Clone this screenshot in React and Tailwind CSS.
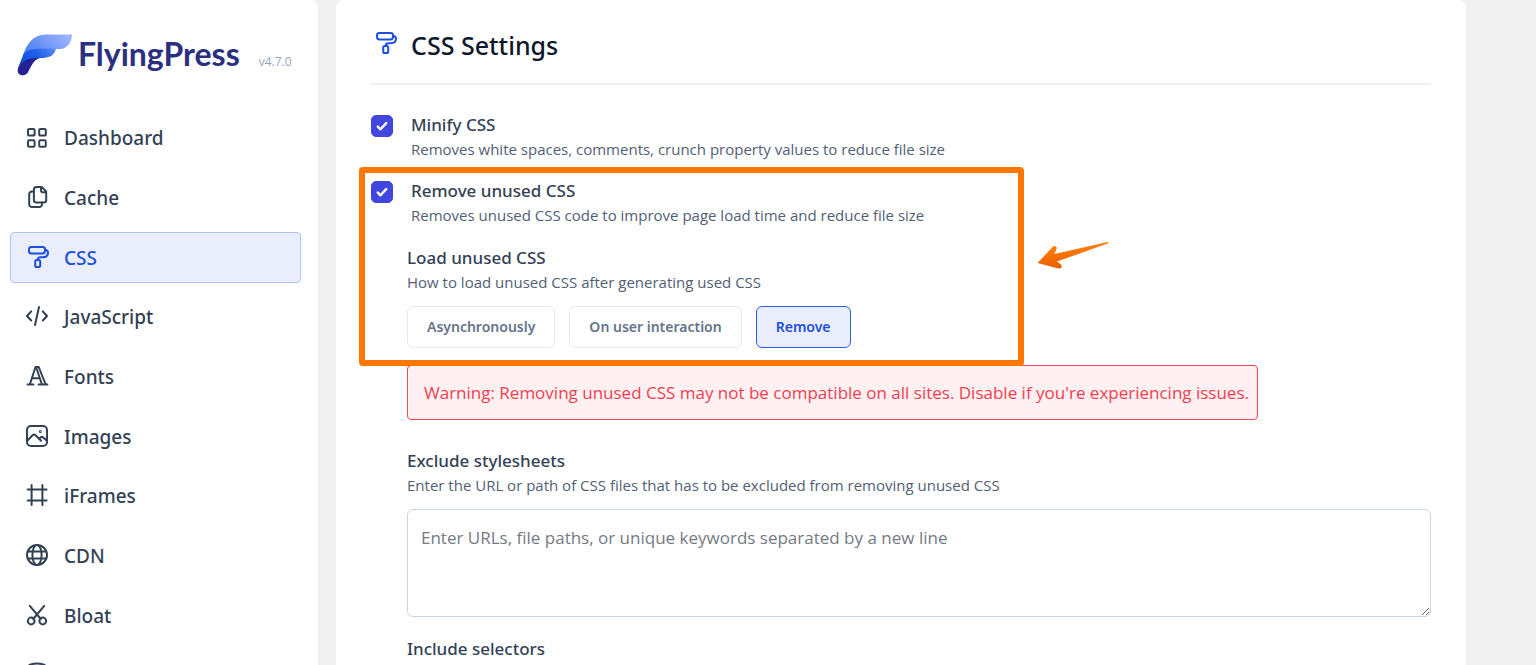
import React from "react";

function Icon({ children, className = "size-6" }) {
  return (
    <svg
      viewBox="0 0 24 24"
      className={`shrink-0 ${className}`}
      fill="none"
      stroke="currentColor"
      strokeWidth="2"
      strokeLinecap="round"
      strokeLinejoin="round"
      aria-hidden="true"
    >
      {children}
    </svg>
  );
}

const icons = {
  dashboard: (
    <>
      <rect x="3" y="3" width="6.6" height="6.6" rx="1.2" />
      <rect x="14.2" y="3" width="6.6" height="6.6" rx="1.2" />
      <rect x="3" y="14.2" width="6.6" height="6.6" rx="1.2" />
      <rect x="14.2" y="14.2" width="6.6" height="6.6" rx="1.2" />
    </>
  ),
  cache: (
    <>
      <path d="M11.5 2h5.2l4.5 4.5V15a2.6 2.6 0 0 1-2.6 2.6h-7.1A2.6 2.6 0 0 1 8.9 15V4.6A2.6 2.6 0 0 1 11.5 2z" />
      <path d="M16 2.5v3.2a1.5 1.5 0 0 0 1.5 1.5h3.3" />
      <path d="M8.9 6.4H7a2.8 2.8 0 0 0-2.8 2.8v10A2.8 2.8 0 0 0 7 22h7.2a2.8 2.8 0 0 0 2.8-2.8v-1.6" />
    </>
  ),
  roller: (
    <>
      <rect x="4" y="2" width="16" height="6.4" rx="2.4" />
      <path d="M20 4.8c2.4.3 3.3 1.8 3 3.6-.4 2.6-2.3 3.8-5 3.8h-2.6c-1.9 0-2.8.9-2.8 2.8" />
      <rect x="10.2" y="15" width="5" height="7" rx="1.6" />
    </>
  ),
  code: (
    <>
      <path d="M6.2 7.3 2 12l4.200 4.500M17.800 7.300 22 12l-4.200 4.500" />
      <path d="M14 3 10 21" />
    </>
  ),
  fonts: (
    <>
      <path d="M5 20 10.500 3h3.200l6.800 17" />
      <path d="M11.200 3.500 16.800 20M7.400 14.300h7" />
      <path d="M2.600 20.600h5.800M13.600 20.600h8.800" />
    </>
  ),
  images: (
    <>
      <rect x="2" y="2" width="20" height="20" rx="4" />
      <path d="m2.500 16.500 5-5.200a2 2 0 0 1 3 0l5.600 5.500" />
      <path d="m14 14.800 1.600-1.400a2 2 0 0 1 2.600 0l3.500 3.200" />
      <circle cx="15.3" cy="7.6" r="0.5" />
    </>
  ),
  frame: <path d="M6.600 2v20M17.400 2v20M2.600 6.400h19M2.600 17.400h19" />,
  globe: (
    <>
      <circle cx="12" cy="12" r="10" />
      <ellipse cx="12" cy="12" rx="4.6" ry="10" />
      <path d="M2.800 8.600h18.400M2.800 15.600h18.400" />
    </>
  ),
  scissors: (
    <>
      <path d="m4.800 2.800 11 13.200M19.200 2.800 8.200 16" />
      <circle cx="6.2" cy="18" r="3.4" />
      <circle cx="17.8" cy="18" r="3.4" />
    </>
  ),
  database: (
    <>
      <ellipse cx="12" cy="5" rx="9" ry="3.5" />
      <path d="M3 5v14c0 2 4 3.500 9 3.500s9-1.500 9-3.500V5M3 12c0 2 4 3.500 9 3.500s9-1.500 9-3.500" />
    </>
  ),
};

const navItems = [
  ["Dashboard", icons.dashboard],
  ["Cache", icons.cache],
  ["CSS", icons.roller],
  ["JavaScript", icons.code],
  ["Fonts", icons.fonts],
  ["Images", icons.images],
  ["iFrames", icons.frame],
  ["CDN", icons.globe],
  ["Bloat", icons.scissors],
];

function Logo() {
  return (
    <svg viewBox="0 0 64 52" className="h-[52px] w-16 shrink-0" aria-hidden="true">
      <defs>
        <linearGradient id="wing-light" x1="0" x2="1" y1="0.4" y2="0">
          <stop offset="0" stopColor="#5484f2" />
          <stop offset="1" stopColor="#a3b8fd" />
        </linearGradient>
        <linearGradient id="wing-mid" x1="0" x2="1" y1="0.5" y2="0">
          <stop offset="0" stopColor="#1250dc" />
          <stop offset="0.5" stopColor="#1f5fe8" />
          <stop offset="1" stopColor="#5e8df5" />
        </linearGradient>
      </defs>
      <path d="M58 6.500H32C20 6.500 13 15 9 27l5 1 26-7h7c7-1 11-7.500 11-14.500z" fill="url(#wing-light)" />
      <path d="M42 20.500H29C20 20.500 12.500 22 9.300 26.500L4 40l2 3 9-8 11-5c10 0 14.500-2.500 16-9.500z" fill="url(#wing-mid)" />
      <path d="M25 30C15 30 8 31.500 4 40.500c-2 6.500 5.500 9 9.500 4.500C17 39.500 19 32 25 30z" fill="#262193" />
    </svg>
  );
}

const navItem = "flex h-[51px] items-center gap-[15px] rounded border pl-3.5 text-[19px] font-medium";

function Sidebar() {
  return (
    <aside className="w-[318px] shrink-0 rounded-tr-lg bg-white pr-[17px] pl-2.5">
      <div className="flex h-[113px] items-center pb-1.5 pl-1">
        <Logo />
        <span className="font-['Lato',sans-serif] text-[32px] leading-10 font-bold text-[#2a2f80]">FlyingPress</span>
        <span className="ml-[19px] pt-4 font-['Open_Sans',sans-serif] text-xs text-[#94a3b8]">v4.7.0</span>
      </div>
      <nav className="flex h-[588px] flex-col justify-between">
        {navItems.map(([label, icon]) => (
          <a
            key={label}
            href={`#${label.toLowerCase()}`}
            className={`${navItem} ${
              label === "CSS"
                ? "border-[#b3c1f5] bg-[#eaedfb] text-[#1d4fe0]"
                : "border-transparent text-[#334155]"
            }`}
          >
            <Icon className="mb-0.5 size-6">{icon}</Icon>
            {label}
          </a>
        ))}
        <a href="#database" aria-label="Database" className={`${navItem} border-transparent text-[#334155]`}>
          <Icon className="mb-0.5 size-6">{icons.database}</Icon>
        </a>
      </nav>
    </aside>
  );
}

function Heading({ title, text }) {
  return (
    <>
      <span className="block text-[17px] leading-6 font-medium text-[#334155]">{title}</span>
      <span className="block font-['Open_Sans',sans-serif] text-[15px] leading-6 text-[#526075]">{text}</span>
    </>
  );
}

function CheckOption({ id, title, text }) {
  return (
    <div className="flex items-start gap-[18px]">
      <span className="mt-0.5 grid size-[22px] shrink-0">
        <input
          id={id}
          type="checkbox"
          defaultChecked
          className="peer col-start-1 row-start-1 size-[22px] appearance-none rounded-[5px] border border-[#cbd5e1] checked:border-[#4147de] checked:bg-[#4147de]"
        />
        <svg
          viewBox="0 0 22 22"
          className="pointer-events-none invisible col-start-1 row-start-1 size-[22px] peer-checked:visible"
          fill="none"
          stroke="white"
          strokeWidth="2.4"
          strokeLinecap="round"
          strokeLinejoin="round"
          aria-hidden="true"
        >
          <path d="m6.800 11.600 2.700 2.700 5.700-6.200" />
        </svg>
      </span>
      <label htmlFor={id}>
        <Heading title={title} text={text} />
      </label>
    </div>
  );
}

function Highlight() {
  return (
    <>
      <div className="pointer-events-none absolute -top-3 -bottom-[18px] -left-3 z-10 w-[665px] rounded-sm border-6 border-[#ff7600]" />
      <svg
        viewBox="0 0 72 30"
        className="pointer-events-none absolute top-[61px] left-[666px] h-[30px] w-[72px]"
        aria-hidden="true"
      >
        <defs>
          <linearGradient id="arrow-fill" x1="0" x2="0.15" y1="0" y2="1">
            <stop offset="0.3" stopColor="#ff7a08" />
            <stop offset="1" stopColor="#e85f00" />
          </linearGradient>
        </defs>
        <path
          d="M.5 23 16 6.500c2-1.600 4.400.2 3.500 2.500l-2 5L70.500 2c1 0 1 1.200.2 1.500L20 21.500l4 3c1.800 2 .3 4.500-2.500 4.100z"
          fill="url(#arrow-fill)"
        />
      </svg>
    </>
  );
}

const loadModes = ["Asynchronously", "On user interaction", "Remove"];

export default function App() {
  return (
    <div className="flex h-screen gap-[18px] overflow-hidden bg-[#f0f0f0] font-['Noto_Sans',sans-serif]">
      <Sidebar />
      <main className="mr-[70px] min-w-0 flex-1 rounded-t-lg bg-white px-[35px]">
        <header className="flex h-[85px] items-center gap-3.5 border-b-2 border-[#eceff4] pt-1.5 pl-0.5 text-[#1d4fe0]">
          <Icon className="mb-1 size-6">{icons.roller}</Icon>
          <h1 className="text-[25px] leading-10 font-medium text-[#0f172a]">CSS Settings</h1>
        </header>

        <div className="pt-7">
          <CheckOption
            id="minify"
            title="Minify CSS"
            text="Removes white spaces, comments, crunch property values to reduce file size"
          />
        </div>

        <section className="relative mt-[18px]">
          <CheckOption
            id="unused"
            title="Remove unused CSS"
            text="Removes unused CSS code to improve page load time and reduce file size"
          />
          <div className="mt-[19px] pl-9">
            <Heading title="Load unused CSS" text="How to load unused CSS after generating used CSS" />
            <div className="mt-3 flex gap-3.5">
              {loadModes.map((mode) => (
                <button
                  key={mode}
                  type="button"
                  className={`h-[42px] rounded-md border px-[19px] text-sm font-semibold ${
                    mode === "Remove"
                      ? "border-[#2d5fe8] bg-[#eaedfb] text-[#1d4fe0]"
                      : "border-[#e5e8ee] bg-white text-[#64748b]"
                  }`}
                >
                  {mode}
                </button>
              ))}
            </div>
          </div>
          <Highlight />
        </section>

        <div className="mt-[17px] pl-9">
          <p className="w-fit rounded border border-[#f4455a] bg-[#fff1f2] py-3.5 pr-2 pl-4 font-['Open_Sans',sans-serif] text-[17px] leading-[25px] text-[#f63d50]">
            Warning: Removing unused CSS may not be compatible on all sites. Disable if you're experiencing issues.
          </p>

          <label htmlFor="exclude" className="mt-[29px] block">
            <Heading
              title="Exclude stylesheets"
              text="Enter the URL or path of CSS files that has to be excluded from removing unused CSS"
            />
          </label>
          <textarea
            id="exclude"
            placeholder="Enter URLs, file paths, or unique keywords separated by a new line"
            className="mt-3 block h-[108px] w-full resize-y rounded-md border border-[#cbd5e1] px-[13px] py-3.5 font-['Open_Sans',sans-serif] text-[17px] leading-7 placeholder:text-[#757a84]"
          />

          <h2 className="mt-5 text-[17px] leading-6 font-medium text-[#334155]">Include selectors</h2>
        </div>
      </main>
    </div>
  );
}
